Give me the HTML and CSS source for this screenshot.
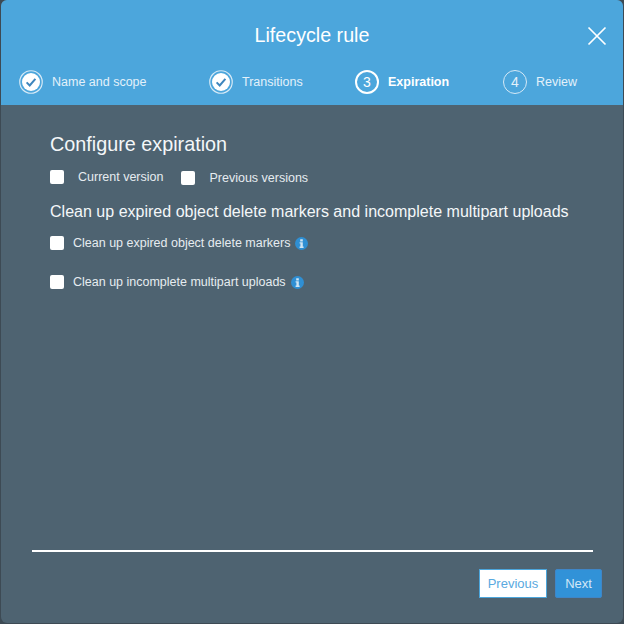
FILE: index.html
```html
<html>

<head>
    <link rel="stylesheet" href="styles.css">
</head>

<body>
    <div class="modal">
        <div class="modal-header">
            <div class="title-row">
                <div class="title">Lifecycle rule</div>
                <svg class="close" width="20" height="20" viewBox="0 0 20 20">
                    <path d="M1.5 1.5 L18.5 18.5 M18.5 1.5 L1.5 18.5" stroke="#fff" stroke-width="1.7" fill="none" />
                </svg>
            </div>
            <div class="steps">
                <div class="step done">
                    <svg class="step-icon" width="24" height="24" viewBox="0 0 24 24">
                        <circle cx="12" cy="12" r="11.25" stroke="#d5e9f6" stroke-width="1.2" fill="none" />
                        <circle cx="12" cy="12" r="9" fill="#fff" />
                        <path d="M7.6 12.4 L10.7 15.5 L16.4 8.8" stroke="#3f86bd" stroke-width="2" fill="none" />
                    </svg>
                    <span>Name and scope</span>
                </div>
                <div class="step done">
                    <svg class="step-icon" width="24" height="24" viewBox="0 0 24 24">
                        <circle cx="12" cy="12" r="11.25" stroke="#d5e9f6" stroke-width="1.2" fill="none" />
                        <circle cx="12" cy="12" r="9" fill="#fff" />
                        <path d="M7.6 12.4 L10.7 15.5 L16.4 8.8" stroke="#3f86bd" stroke-width="2" fill="none" />
                    </svg>
                    <span>Transitions</span>
                </div>
                <div class="step current">
                    <div class="step-number">3</div>
                    <span>Expiration</span>
                </div>
                <div class="step">
                    <div class="step-number">4</div>
                    <span>Review</span>
                </div>
            </div>
        </div>
        <div class="modal-body">
            <div class="content">
                <h2>Configure expiration</h2>
                <div class="version-row">
                    <label class="version first"><span class="box"></span>Current version</label>
                    <label class="version second"><span class="box"></span>Previous versions</label>
                </div>
                <h3>Clean up expired object delete markers and incomplete multipart uploads</h3>
                <div class="option">
                    <span class="box"></span>Clean up expired object delete markers
                    <svg class="info" width="13" height="13" viewBox="0 0 13 13">
                        <circle cx="6.5" cy="6.5" r="6.5" fill="#2f8fd3" />
                        <path d="M5.2 2.2 H7.8 V4.4 H5.2 Z M4.6 5.2 H7.8 V9.5 H8.6 V11 H4.6 V9.5 H5.4 V6.6 H4.6 Z" fill="#cfe5f4" />
                    </svg>
                </div>
                <div class="option">
                    <span class="box"></span>Clean up incomplete multipart uploads
                    <svg class="info" width="13" height="13" viewBox="0 0 13 13">
                        <circle cx="6.5" cy="6.5" r="6.5" fill="#2f8fd3" />
                        <path d="M5.2 2.2 H7.8 V4.4 H5.2 Z M4.6 5.2 H7.8 V9.5 H8.6 V11 H4.6 V9.5 H5.4 V6.6 H4.6 Z" fill="#cfe5f4" />
                    </svg>
                </div>
            </div>
            <div class="modal-footer">
                <div class="buttons">
                    <div class="button previous">Previous</div>
                    <div class="button next">Next</div>
                </div>
            </div>
        </div>
    </div>
</body>

</html>
```

FILE: styles.css
```css
html, body {
    margin: 0;
    height: 100%;
    background-color: #3d4a54;
}

body {
    font-family: "Liberation Sans", Arial, sans-serif;
    padding: 0 1px 1px 1px;
    box-sizing: border-box;
}

.modal {
    height: 623px;
    border-radius: 6px;
    overflow: hidden;
    display: flex;
    flex-direction: column;
    background-color: #4e6371;
}

.modal-header {
    height: 105px;
    background-color: #4ca6dc;
    color: #fff;
    flex-shrink: 0;
}

.title-row {
    height: 69px;
    padding-top: 1px;
    display: flex;
    justify-content: center;
    align-items: center;
    position: relative;
}

.title {
    font-size: 19.7px;
    color: #fff;
}

.close {
    position: absolute;
    right: 16px;
    top: 26px;
}

.steps {
    display: grid;
    grid-template-columns: 190px 146px 148px 1fr;
    padding-left: 18px;
    height: 24px;
}

.step {
    display: flex;
    align-items: center;
    font-size: 12.5px;
    color: #e3f1fa;
}

.step span {
    margin-left: 9px;
}

.step-icon {
    flex-shrink: 0;
}

.step-number {
    width: 24px;
    height: 24px;
    box-sizing: border-box;
    border: 1px solid #d5e9f6;
    border-radius: 50%;
    display: flex;
    justify-content: center;
    align-items: center;
    font-size: 14px;
}

.current {
    color: #fff;
    font-weight: bold;
}

.current .step-number {
    border: 2px solid #fff;
    font-weight: normal;
}

.modal-body {
    flex: 1;
    display: flex;
    flex-direction: column;
    padding: 0 30px 0 31px;
}

.content {
    flex: 1;
    padding: 27px 0 0 18px;
}

h2 {
    margin: 0;
    font-size: 19.8px;
    font-weight: normal;
    line-height: 24px;
    color: #f4f7f9;
}

h3 {
    margin: 16px 0 0 0;
    font-size: 16.05px;
    font-weight: normal;
    line-height: 20px;
    color: #f4f7f9;
}

.box {
    width: 14px;
    height: 14px;
    border-radius: 2px;
    background-color: #fff;
    flex-shrink: 0;
}

.version-row {
    display: flex;
    margin-top: 13px;
    height: 16px;
    font-size: 12.5px;
    color: #e6ecf0;
}

.version {
    display: flex;
    align-items: center;
}

.version .box {
    margin-right: 14px;
}

.version.first {
    margin-right: 18px;
}

.version.second {
    position: relative;
    top: 1px;
}

.option {
    display: flex;
    align-items: center;
    height: 16px;
    margin-top: 14px;
    font-size: 12.5px;
    color: #e6ecf0;
}

.option + .option {
    margin-top: 23px;
}

.option .box {
    margin-right: 9px;
}

.info {
    margin-left: 5px;
}

.modal-footer {
    border-top: 2px solid #fff;
    height: 71px;
    flex-shrink: 0;
}

.buttons {
    display: flex;
    justify-content: flex-end;
    gap: 8px;
    padding-top: 17px;
    margin-right: -9px;
}

.button {
    height: 29px;
    box-sizing: border-box;
    display: flex;
    align-items: center;
    justify-content: center;
    font-size: 13px;
}

.previous {
    width: 68px;
    background-color: #fff;
    border: 1px solid #4ca6dc;
    color: #5aa9e0;
}

.next {
    width: 47px;
    background-color: #3192d8;
    border: 1px solid #3f86c8;
    border-radius: 2px;
    color: #d3e8f7;
}
```
